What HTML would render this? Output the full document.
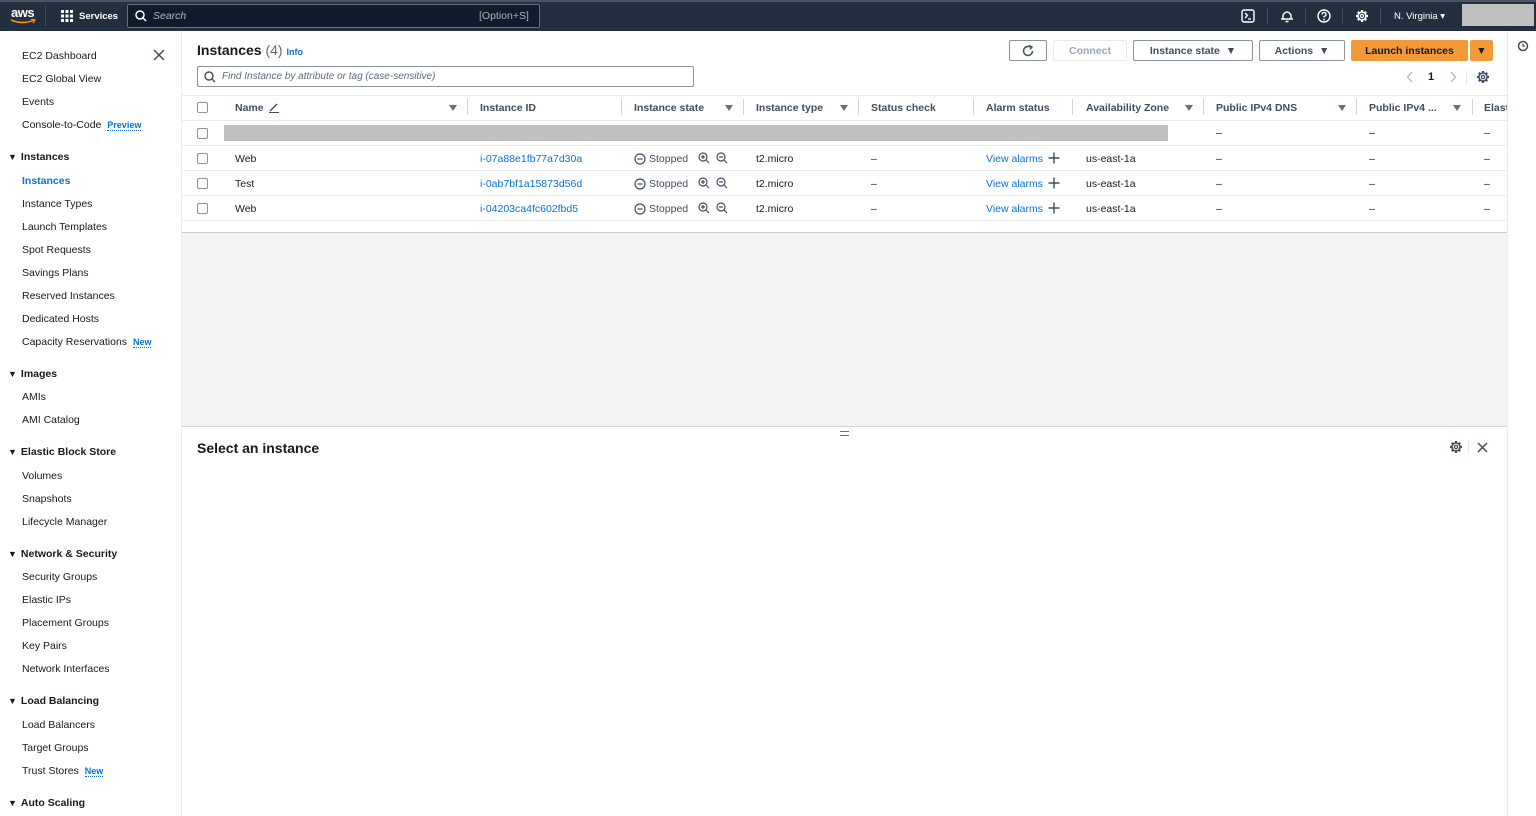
<!DOCTYPE html>
<html><head><meta charset="utf-8"><style>
*{margin:0;padding:0;box-sizing:border-box}
body{width:1536px;height:816px;overflow:hidden;background:#fff;font-family:"Liberation Sans",sans-serif;font-size:10.5px;color:#16191f;position:relative}
.a{position:absolute;white-space:nowrap}
.top{left:0;top:0;width:1536px;height:31px;background:#232f3e;border-top:2px solid #4a5462}
.sb{color:#16191f;font-size:10.5px}
.hd{font-weight:bold;font-size:10.5px}
.lnk{color:#0972d3}
.cb{width:11px;height:11px;border:1px solid #8d9399;border-radius:2px;background:#fff}
.th{font-weight:bold;color:#414d5c;font-size:10.5px}
.dv{width:1px;height:16px;background:#d1d5db}
.tri{width:0;height:0;border-left:4px solid transparent;border-right:4px solid transparent;border-top:6px solid #687078}
.btn{height:21px;border:1px solid #8d9399;border-radius:2px;background:#fff;font-weight:bold;color:#414d5c;text-align:center;line-height:21px;font-size:10.5px}
.rowline{height:1px;background:#e9ebed}
.new{color:#0972d3;font-weight:bold;font-size:9px;border-bottom:1px dotted #0972d3}
.st{color:#414d5c}
</style></head><body>
<svg width="0" height="0" style="position:absolute"><defs>
<g id="gear"><g stroke-width="2.2" stroke-linecap="butt">
<path d="M7 1 V3.2 M7 10.8 V13 M1 7 H3.2 M10.8 7 H13 M2.8 2.8 L4.3 4.3 M9.7 9.7 L11.2 11.2 M11.2 2.8 L9.7 4.3 M4.3 9.7 L2.8 11.2"/></g>
<circle cx="7" cy="7" r="4" fill="none" stroke-width="1.5"/><circle cx="7" cy="7" r="1.6" fill="none" stroke-width="1.3"/></g>
<g id="stop"><circle cx="6" cy="6" r="5" fill="none" stroke="#414d5c" stroke-width="1.2"/><path d="M3.5 6 H8.5" stroke="#414d5c" stroke-width="1.2"/></g>
<g id="zin"><circle cx="5" cy="5" r="4" fill="none" stroke="#414d5c" stroke-width="1.2"/><path d="M8 8 L11 11 M3 5 H7 M5 3 V7" stroke="#414d5c" stroke-width="1.2"/></g>
<g id="zout"><circle cx="5" cy="5" r="4" fill="none" stroke="#414d5c" stroke-width="1.2"/><path d="M8 8 L11 11 M3 5 H7" stroke="#414d5c" stroke-width="1.2"/></g>
</defs></svg>
<div class="a top"></div>
<div class="a" style="left:11px;top:5px;color:#fff;font-size:13px;font-weight:bold;letter-spacing:-0.5px">aws</div>
<svg class="a" style="left:10px;top:19px" width="26" height="6"><path d="M1 1 Q13 6 24 1" stroke="#ff9900" stroke-width="1.5" fill="none"/><path d="M21 0 L25 1 L23 4" stroke="#ff9900" stroke-width="1.2" fill="none"/></svg>
<div class="a" style="left:45px;top:6px;width:1px;height:20px;background:#414d5c"></div>
<svg class="a" style="left:61px;top:10px" width="12" height="12" fill="#fff"><rect x="0" y="0" width="3" height="3"/><rect x="4.5" y="0" width="3" height="3"/><rect x="9" y="0" width="3" height="3"/><rect x="0" y="4.5" width="3" height="3"/><rect x="4.5" y="4.5" width="3" height="3"/><rect x="9" y="4.5" width="3" height="3"/><rect x="0" y="9" width="3" height="3"/><rect x="4.5" y="9" width="3" height="3"/><rect x="9" y="9" width="3" height="3"/></svg>
<div class="a" style="left:79px;top:11px;color:#fff;font-size:9.5px;font-weight:bold">Services</div>
<div class="a" style="left:127px;top:4px;width:413px;height:24px;background:#0f1b2a;border:1px solid #687078;border-radius:2px"></div>
<svg class="a" style="left:135px;top:10px" width="12" height="12"><circle cx="5" cy="5" r="4" stroke="#fff" stroke-width="1.5" fill="none"/><path d="M8 8 L11 11" stroke="#fff" stroke-width="1.5"/></svg>
<div class="a" style="left:153px;top:10px;color:#b0b6bd;font-style:italic;font-size:10.5px">Search</div>
<div class="a" style="left:479px;top:10px;color:#b0b6bd;font-size:10.5px">[Option+S]</div>
<svg class="a" style="left:1241px;top:9px" width="14" height="14"><rect x="1" y="1" width="12" height="12" rx="2" stroke="#fff" fill="none" stroke-width="1.4"/><path d="M4 4 L6.5 6.5 L4 9 M7 10 H10" stroke="#fff" stroke-width="1.3" fill="none"/></svg>
<div class="a" style="left:1267px;top:8px;width:1px;height:16px;background:#414d5c"></div>
<svg class="a" style="left:1280px;top:9px" width="14" height="14"><path d="M3 10 L3 6 Q7 0 11 6 L11 10 Z M1 10 H13 M5.5 12.5 H8.5" stroke="#fff" stroke-width="1.4" fill="none"/></svg>
<div class="a" style="left:1305px;top:8px;width:1px;height:16px;background:#414d5c"></div>
<svg class="a" style="left:1317px;top:9px" width="14" height="14"><circle cx="7" cy="7" r="6" stroke="#fff" stroke-width="1.4" fill="none"/><path d="M5 5.5 Q5 3.5 7 3.5 Q9 3.5 9 5.5 Q9 7 7 7.5 V8.5" stroke="#fff" stroke-width="1.3" fill="none"/><circle cx="7" cy="10.5" r="0.9" fill="#fff"/></svg>
<div class="a" style="left:1342px;top:8px;width:1px;height:16px;background:#414d5c"></div>
<svg class="a" style="left:1355px;top:9px" width="14" height="14" stroke="#fff"><use href="#gear"/></svg>
<div class="a" style="left:1380px;top:8px;width:1px;height:16px;background:#414d5c"></div>
<div class="a" style="left:1394px;top:11px;color:#fff;font-size:9.5px">N. Virginia ▾</div>
<div class="a" style="left:1462px;top:4px;width:72px;height:22px;background:#c0c0c0"></div>

<!-- sidebar -->
<div class="a" style="left:181px;top:31px;width:1px;height:785px;background:#e9ebed"></div>
<div class="a sb" style="left:22px;top:50px">EC2 Dashboard</div>
<svg class="a" style="left:153px;top:49px" width="12" height="12"><path d="M1 1 L11 11 M11 1 L1 11" stroke="#414d5c" stroke-width="1.5"/></svg>
<div class="a sb" style="left:22px;top:73px">EC2 Global View</div>
<div class="a sb" style="left:22px;top:96px">Events</div>
<div class="a sb" style="left:22px;top:119px">Console-to-Code <span class="new" style="margin-left:3px">Preview</span></div>
<div class="a hd" style="left:8px;top:151px"><span style="font-size:9px;margin-right:4px">▼</span>Instances</div>
<div class="a sb lnk" style="left:22px;top:175px;font-weight:bold">Instances</div>
<div class="a sb" style="left:22px;top:198px">Instance Types</div>
<div class="a sb" style="left:22px;top:221px">Launch Templates</div>
<div class="a sb" style="left:22px;top:244px">Spot Requests</div>
<div class="a sb" style="left:22px;top:267px">Savings Plans</div>
<div class="a sb" style="left:22px;top:290px">Reserved Instances</div>
<div class="a sb" style="left:22px;top:313px">Dedicated Hosts</div>
<div class="a sb" style="left:22px;top:336px">Capacity Reservations <span class="new" style="margin-left:3px">New</span></div>
<div class="a hd" style="left:8px;top:368px"><span style="font-size:9px;margin-right:4px">▼</span>Images</div>
<div class="a sb" style="left:22px;top:391px">AMIs</div>
<div class="a sb" style="left:22px;top:414px">AMI Catalog</div>
<div class="a hd" style="left:8px;top:446px"><span style="font-size:9px;margin-right:4px">▼</span>Elastic Block Store</div>
<div class="a sb" style="left:22px;top:470px">Volumes</div>
<div class="a sb" style="left:22px;top:493px">Snapshots</div>
<div class="a sb" style="left:22px;top:516px">Lifecycle Manager</div>
<div class="a hd" style="left:8px;top:548px"><span style="font-size:9px;margin-right:4px">▼</span>Network &amp; Security</div>
<div class="a sb" style="left:22px;top:571px">Security Groups</div>
<div class="a sb" style="left:22px;top:594px">Elastic IPs</div>
<div class="a sb" style="left:22px;top:617px">Placement Groups</div>
<div class="a sb" style="left:22px;top:640px">Key Pairs</div>
<div class="a sb" style="left:22px;top:663px">Network Interfaces</div>
<div class="a hd" style="left:8px;top:695px"><span style="font-size:9px;margin-right:4px">▼</span>Load Balancing</div>
<div class="a sb" style="left:22px;top:719px">Load Balancers</div>
<div class="a sb" style="left:22px;top:742px">Target Groups</div>
<div class="a sb" style="left:22px;top:765px">Trust Stores <span class="new" style="margin-left:3px">New</span></div>
<div class="a hd" style="left:8px;top:797px"><span style="font-size:9px;margin-right:4px">▼</span>Auto Scaling</div>

<!-- right strip -->
<div class="a" style="left:1507px;top:31px;width:1px;height:785px;background:#e9ebed"></div>
<svg class="a" style="left:1517px;top:40px" width="12" height="12"><circle cx="6" cy="6" r="4.5" stroke="#414d5c" stroke-width="1.5" fill="none"/><path d="M6 3.5 V6 H8" stroke="#414d5c" stroke-width="1.2" fill="none"/></svg>

<!-- header -->
<div class="a" style="left:197px;top:42px;font-size:14px;font-weight:bold">Instances <span style="font-weight:normal;color:#5f6b7a">(4)</span> <span style="color:#0972d3;font-size:9px">Info</span></div>
<div class="a btn" style="left:1009px;top:40px;width:38px"><svg width="14" height="14" style="margin-top:3px;vertical-align:top"><path d="M11.5 7 A4.5 4.5 0 1 1 9.5 3.2" stroke="#414d5c" stroke-width="1.5" fill="none"/><path d="M8 1.5 L11 3 L9 5.5" stroke="#414d5c" stroke-width="1.4" fill="none"/></svg></div>
<div class="a btn" style="left:1053px;top:40px;width:74px;border-color:#e9ebed;color:#9ba7b6">Connect</div>
<div class="a btn" style="left:1133px;top:40px;width:120px">Instance state &nbsp;▼</div>
<div class="a btn" style="left:1259px;top:40px;width:86px">Actions &nbsp;▼</div>
<div class="a btn" style="left:1351px;top:40px;width:117px;background:#f29a38;border-color:#f29a38;color:#16191f">Launch instances</div>
<div class="a btn" style="left:1470px;top:40px;width:23px;background:#f29a38;border-color:#f29a38;color:#16191f">▼</div>
<div class="a" style="left:197px;top:66px;width:497px;height:21px;border:1px solid #8d9399;border-radius:2px"></div>
<svg class="a" style="left:204px;top:71px" width="12" height="12"><circle cx="5" cy="5" r="4" stroke="#414d5c" stroke-width="1.4" fill="none"/><path d="M8 8 L11 11" stroke="#414d5c" stroke-width="1.4"/></svg>
<div class="a" style="left:222px;top:71px;font-style:italic;color:#5f6b7a;font-size:10px">Find Instance by attribute or tag (case-sensitive)</div>
<svg class="a" style="left:1406px;top:71px" width="8" height="12"><path d="M6 1 L1.5 6 L6 11" stroke="#aab7b8" stroke-width="1.3" fill="none"/></svg>
<div class="a" style="left:1428px;top:71px;font-weight:bold;font-size:11px">1</div>
<svg class="a" style="left:1449px;top:71px" width="8" height="12"><path d="M2 1 L6.5 6 L2 11" stroke="#aab7b8" stroke-width="1.3" fill="none"/></svg>
<div class="a" style="left:1466px;top:70px;width:1px;height:15px;background:#e9ebed"></div>
<svg class="a" style="left:1476px;top:70px" width="14" height="14" stroke="#414d5c"><use href="#gear"/></svg>

<!-- table header -->
<div class="a" style="left:182px;top:95px;width:1325px;height:1px;background:#e9ebed"></div>
<div class="a cb" style="left:197px;top:102px"></div>
<div class="a th" style="left:235px;top:102px">Name</div>
<svg class="a" style="left:268px;top:102px" width="12" height="11"><path d="M2 9 L9 2" stroke="#414d5c" stroke-width="1.4"/><path d="M1 10.5 H11" stroke="#414d5c" stroke-width="1"/></svg>
<div class="a tri" style="left:449px;top:105px"></div>
<div class="a dv" style="left:467px;top:99px"></div>
<div class="a th" style="left:480px;top:102px">Instance ID</div>
<div class="a dv" style="left:621px;top:99px"></div>
<div class="a th" style="left:634px;top:102px">Instance state</div>
<div class="a tri" style="left:725px;top:105px"></div>
<div class="a dv" style="left:743px;top:99px"></div>
<div class="a th" style="left:756px;top:102px">Instance type</div>
<div class="a tri" style="left:840px;top:105px"></div>
<div class="a dv" style="left:858px;top:99px"></div>
<div class="a th" style="left:871px;top:102px">Status check</div>
<div class="a dv" style="left:973px;top:99px"></div>
<div class="a th" style="left:986px;top:102px">Alarm status</div>
<div class="a dv" style="left:1072px;top:99px"></div>
<div class="a th" style="left:1086px;top:102px">Availability Zone</div>
<div class="a tri" style="left:1185px;top:105px"></div>
<div class="a dv" style="left:1203px;top:99px"></div>
<div class="a th" style="left:1216px;top:102px">Public IPv4 DNS</div>
<div class="a tri" style="left:1338px;top:105px"></div>
<div class="a dv" style="left:1356px;top:99px"></div>
<div class="a th" style="left:1369px;top:102px">Public IPv4 ...</div>
<div class="a tri" style="left:1453px;top:105px"></div>
<div class="a dv" style="left:1472px;top:99px"></div>
<div class="a th" style="left:1484px;top:102px;width:23px;overflow:hidden">Elast</div>
<div class="a rowline" style="left:182px;top:120px;width:1325px"></div>

<!-- rows -->
<div class="a cb" style="left:197px;top:128px"></div>
<div class="a" style="left:224px;top:125px;width:944px;height:16px;background:#c0c0c0"></div>
<div class="a" style="left:1216px;top:127px">–</div><div class="a" style="left:1369px;top:127px">–</div><div class="a" style="left:1484px;top:127px">–</div>
<div class="a rowline" style="left:182px;top:145px;width:1325px"></div>

<div class="a cb" style="left:197px;top:153px"></div>
<div class="a" style="left:235px;top:153px">Web</div>
<div class="a lnk" style="left:480px;top:153px">i-07a88e1fb77a7d30a</div>
<svg class="a" style="left:634px;top:153px" width="12" height="12"><use href="#stop"/></svg>
<div class="a st" style="left:649px;top:153px">Stopped</div>
<svg class="a" style="left:698px;top:152px" width="12" height="12"><use href="#zin"/></svg>
<svg class="a" style="left:716px;top:152px" width="12" height="12"><use href="#zout"/></svg>
<div class="a" style="left:756px;top:153px">t2.micro</div>
<div class="a" style="left:871px;top:153px">–</div>
<div class="a lnk" style="left:986px;top:153px">View alarms</div>
<svg class="a" style="left:1048px;top:152px" width="12" height="12"><path d="M6 0.5 V11.5 M0.5 6 H11.5" stroke="#414d5c" stroke-width="1.4"/></svg>
<div class="a" style="left:1086px;top:153px">us-east-1a</div>
<div class="a" style="left:1216px;top:153px">–</div><div class="a" style="left:1369px;top:153px">–</div><div class="a" style="left:1484px;top:153px">–</div>
<div class="a rowline" style="left:182px;top:170px;width:1325px"></div>

<div class="a cb" style="left:197px;top:178px"></div>
<div class="a" style="left:235px;top:178px">Test</div>
<div class="a lnk" style="left:480px;top:178px">i-0ab7bf1a15873d56d</div>
<svg class="a" style="left:634px;top:178px" width="12" height="12"><use href="#stop"/></svg>
<div class="a st" style="left:649px;top:178px">Stopped</div>
<svg class="a" style="left:698px;top:177px" width="12" height="12"><use href="#zin"/></svg>
<svg class="a" style="left:716px;top:177px" width="12" height="12"><use href="#zout"/></svg>
<div class="a" style="left:756px;top:178px">t2.micro</div>
<div class="a" style="left:871px;top:178px">–</div>
<div class="a lnk" style="left:986px;top:178px">View alarms</div>
<svg class="a" style="left:1048px;top:177px" width="12" height="12"><path d="M6 0.5 V11.5 M0.5 6 H11.5" stroke="#414d5c" stroke-width="1.4"/></svg>
<div class="a" style="left:1086px;top:178px">us-east-1a</div>
<div class="a" style="left:1216px;top:178px">–</div><div class="a" style="left:1369px;top:178px">–</div><div class="a" style="left:1484px;top:178px">–</div>
<div class="a rowline" style="left:182px;top:195px;width:1325px"></div>

<div class="a cb" style="left:197px;top:203px"></div>
<div class="a" style="left:235px;top:203px">Web</div>
<div class="a lnk" style="left:480px;top:203px">i-04203ca4fc602fbd5</div>
<svg class="a" style="left:634px;top:203px" width="12" height="12"><use href="#stop"/></svg>
<div class="a st" style="left:649px;top:203px">Stopped</div>
<svg class="a" style="left:698px;top:202px" width="12" height="12"><use href="#zin"/></svg>
<svg class="a" style="left:716px;top:202px" width="12" height="12"><use href="#zout"/></svg>
<div class="a" style="left:756px;top:203px">t2.micro</div>
<div class="a" style="left:871px;top:203px">–</div>
<div class="a lnk" style="left:986px;top:203px">View alarms</div>
<svg class="a" style="left:1048px;top:202px" width="12" height="12"><path d="M6 0.5 V11.5 M0.5 6 H11.5" stroke="#414d5c" stroke-width="1.4"/></svg>
<div class="a" style="left:1086px;top:203px">us-east-1a</div>
<div class="a" style="left:1216px;top:203px">–</div><div class="a" style="left:1369px;top:203px">–</div><div class="a" style="left:1484px;top:203px">–</div>
<div class="a rowline" style="left:182px;top:220px;width:1325px"></div>

<!-- gray area -->
<div class="a" style="left:182px;top:232px;width:1325px;height:195px;background:#f2f3f3;border-top:1px solid #c6c6cd;border-bottom:1px solid #d1d5db"></div>
<div class="a" style="left:840px;top:431px;width:9px;height:1px;background:#687078"></div>
<div class="a" style="left:840px;top:435px;width:9px;height:1px;background:#687078"></div>
<div class="a" style="left:197px;top:440px;font-size:14px;font-weight:bold">Select an instance</div>
<svg class="a" style="left:1449px;top:440px" width="14" height="14" stroke="#414d5c"><use href="#gear"/></svg>
<div class="a" style="left:1468px;top:440px;width:1px;height:14px;background:#e9ebed"></div>
<svg class="a" style="left:1477px;top:442px" width="11" height="11"><path d="M1 1 L10 10 M10 1 L1 10" stroke="#414d5c" stroke-width="1.5"/></svg>
</body></html>
